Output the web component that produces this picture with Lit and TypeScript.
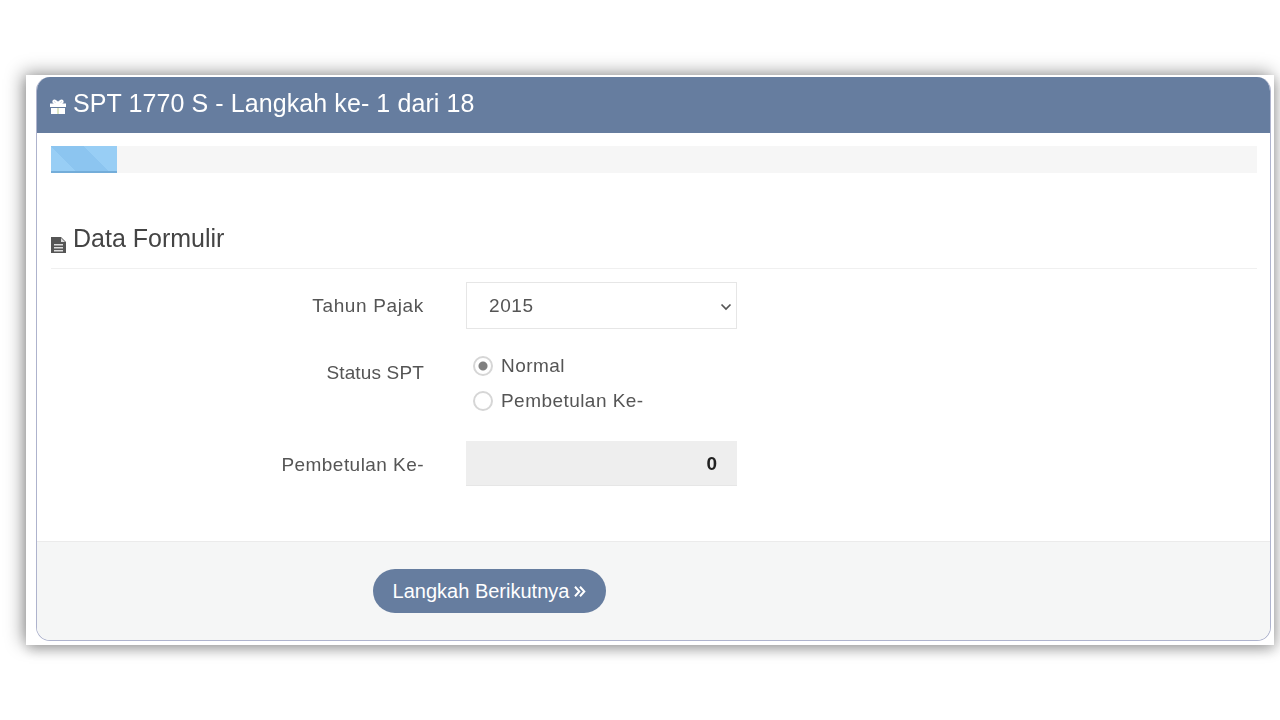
import { LitElement, html, css } from "lit";
import { customElement } from "lit/decorators.js";

@customElement("app-root")
export class AppRoot extends LitElement {
  static styles = css`
    :host {
      display: block;
      width: 1280px;
      height: 720px;
      overflow: hidden;
      background: #fff;
      font-family: "Liberation Sans", Arial, sans-serif;
      color: #444;
    }
    * { box-sizing: border-box; }
    .page { padding: 75px 6px 0 26px; filter: blur(0.4px); }
    .sheet {
      height: 570px;
      background: #fff;
      padding: 2px 3px 4px 10px;
      box-shadow: -3px -2px 17px rgba(0, 0, 0, 0.4), 2px 5px 12px rgba(0, 0, 0, 0.22);
    }
    .panel {
      height: 100%;
      border: 1px solid #aeb3cd;
      border-top: none;
      border-radius: 14px;
      display: flex;
      flex-direction: column;
      overflow: hidden;
    }
    .head {
      height: 56px;
      background: #667d9f;
      color: #fff;
      display: flex;
      align-items: center;
      gap: 7px;
      padding: 0 0 4px 13px;
      font-size: 25px;
      letter-spacing: 0.09px;
      flex: none;
    }
    .body { flex: 1; padding: 13px 13px 0 14px; }
    .progress { height: 27px; background: #f6f6f6; }
    .bar {
      height: 100%;
      width: 66px;
      border-bottom: 2px solid #74add9;
      background: linear-gradient(45deg, #8cc5f0 25%, #98cef5 25%, #98cef5 50%, #8cc5f0 50%, #8cc5f0 75%, #98cef5 75%);
      background-size: 66px 66px;
    }
    .title {
      margin-top: 47px;
      height: 49px;
      padding-bottom: 15px;
      border-bottom: 1px solid #f0f0f0;
      display: flex;
      align-items: flex-end;
      gap: 7px;
      font-size: 25px;
      color: #444;
      line-height: 30px;
    }
    .form {
      margin-top: 13px;
      display: grid;
      grid-template-columns: 373px 271px;
      column-gap: 42px;
      font-size: 19px;
      letter-spacing: 0.45px;
    }
    label.lab { text-align: right; color: #555; }
    .l1 { line-height: 48px; letter-spacing: 0.65px; }
    .l2 { padding-top: 33px; line-height: 20px; letter-spacing: 0.15px; }
    .l3 { padding-top: 14px; line-height: 20px; }
    .selwrap { position: relative; height: 47px; }
    select {
      width: 100%;
      height: 100%;
      appearance: none;
      border: 1px solid #e6e6e6;
      background: #fff;
      padding: 0 22px;
      font: inherit;
      letter-spacing: 0.6px;
      color: #555;
      border-radius: 0;
    }
    .chev { position: absolute; right: 5px; top: 21px; }
    .radios {
      margin-top: 26px;
      padding-left: 7px;
      display: flex;
      flex-direction: column;
      gap: 15px;
      height: 85px;
    }
    .radio {
      display: flex;
      align-items: center;
      gap: 8px;
      height: 20px;
      color: #555;
    }
    input[type="radio"] {
      appearance: none;
      margin: 0;
      width: 20px;
      height: 20px;
      border-radius: 50%;
      border: 2px solid #d6d6d6;
      background: #fff;
      flex: none;
    }
    input[type="radio"]:checked {
      background: radial-gradient(circle, #808080 0 4px, #fff 5px);
    }
    .num {
      width: 100%;
      height: 45px;
      border: none;
      border-bottom: 1px solid #e6e6e6;
      background: #eeeeee;
      text-align: right;
      padding: 1px 20px 0;
      font: inherit;
      font-size: 19px;
      font-weight: 700;
      letter-spacing: 0;
      color: #222;
    }
    .foot {
      height: 99px;
      flex: none;
      background: #f5f6f6;
      border-top: 1px solid #ebebeb;
      padding: 27px 0 0 336px;
    }
    .btn {
      width: 233px;
      height: 44px;
      border: none;
      border-radius: 22px;
      background: #667d9f;
      color: #fff;
      font: 20px "Liberation Sans", Arial, sans-serif;
      display: flex;
      align-items: center;
      justify-content: center;
      gap: 5px;
      padding: 0;
    }
  `;

  render() {
    return html`
      <div class="page">
        <div class="sheet">
          <div class="panel">
            <div class="head">
              <svg width="16" height="15" viewBox="0 0 16 15" style="margin-top:7px">
                <path fill="#fff" d="M0 4.500h16v3.500H0zM1 9h14v6H1z"/>
                <path fill="none" stroke="#fff" stroke-width="2" d="M8 4.500C6.500 1.300 3.400 .8 3.300 2.600 3.200 4.300 5.500 4.500 8 4.500 10.500 4.500 12.800 4.300 12.700 2.600 12.600 .8 9.500 1.300 8 4.500z"/>
                <path fill="#dde6c4" d="M7 9h2v6H7z"/>
              </svg>
              <span>SPT 1770 S - Langkah ke- 1 dari 18</span>
            </div>
            <div class="body">
              <div class="progress"><div class="bar"></div></div>
              <div class="title">
                <svg width="15" height="16" viewBox="0 0 15 16">
                  <path fill="#555" d="M0 0h10l5 5v11H0z"/>
                  <path fill="#ddd" d="M10 1 14 5h-4zM3 7h9v1.400H3zM3 10h9v1.400H3zM3 13h9v1.400H3z"/>
                </svg>
                <span>Data Formulir</span>
              </div>
              <div class="form">
                <label class="lab l1">Tahun Pajak</label>
                <div class="selwrap">
                  <select><option>2015</option></select>
                  <svg class="chev" width="12" height="8" viewBox="0 0 12 8">
                    <path fill="none" stroke="#555" stroke-width="1.700" d="M1.500 1.500 6 6l4.500-4.500"/>
                  </svg>
                </div>
                <label class="lab l2">Status SPT</label>
                <div class="radios">
                  <div class="radio"><input type="radio" name="s" checked /><span>Normal</span></div>
                  <div class="radio"><input type="radio" name="s" /><span>Pembetulan Ke-</span></div>
                </div>
                <label class="lab l3">Pembetulan Ke-</label>
                <input class="num" .value=${"0"} readonly />
              </div>
            </div>
            <div class="foot">
              <button class="btn">
                <span>Langkah Berikutnya</span>
                <svg width="12" height="11" viewBox="0 0 12 11">
                  <path fill="none" stroke="#fff" stroke-width="2" d="M1 .8 5.300 5.500 1 10.200M6 .8 10.300 5.500 6 10.200"/>
                </svg>
              </button>
            </div>
          </div>
        </div>
      </div>
    `;
  }
}
